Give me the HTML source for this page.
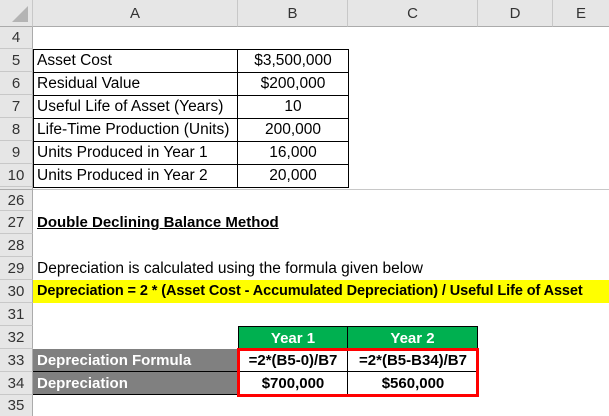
<!DOCTYPE html>
<html><head><style>
*{margin:0;padding:0;box-sizing:border-box}
body{width:609px;height:416px;overflow:hidden;background:#fff;font-family:"Liberation Sans",Arial,sans-serif;font-size:15.5px;color:#000;position:relative}
.a{position:absolute;white-space:nowrap}
.ch{top:0;height:27px;background:#e6e6e6;border-right:1px solid #c8c8c8;border-bottom:1px solid #ababab;text-align:center;line-height:27px;color:#333;font-size:15px}
.rh{left:0;width:33px;background:#e6e6e6;border-right:1px solid #ababab;border-bottom:1px solid #c8c8c8;text-align:center;color:#333;font-size:15px}
.c{line-height:23px;height:23px}
.b{font-weight:bold;font-size:15px}
</style></head><body>
<div class="a ch" style="left:0;width:33px"><div style="position:absolute;right:4px;bottom:4px;width:0;height:0;border-left:16px solid transparent;border-bottom:16px solid #b4b4b4"></div></div>
<div class="a ch" style="left:33px;width:205px">A</div>
<div class="a ch" style="left:238px;width:110px">B</div>
<div class="a ch" style="left:348px;width:130px">C</div>
<div class="a ch" style="left:478px;width:75px">D</div>
<div class="a ch" style="left:553px;width:56px;border-right:none">E</div>

<div class="a rh" style="top:27px;height:22px;line-height:22px">4</div>
<div class="a rh" style="top:49px;height:23px;line-height:23px">5</div>
<div class="a rh" style="top:72px;height:23px;line-height:23px">6</div>
<div class="a rh" style="top:95px;height:23px;line-height:23px">7</div>
<div class="a rh" style="top:118px;height:23px;line-height:23px">8</div>
<div class="a rh" style="top:141px;height:23px;line-height:23px">9</div>
<div class="a rh" style="top:164px;height:23px;line-height:23px">10</div>
<div class="a" style="left:0;top:187px;width:33px;height:3px;background:#e6e6e6;border-bottom:1px solid #ababab;border-right:1px solid #ababab"></div>
<div class="a" style="left:33px;top:187px;width:576px;height:3px;border-bottom:1px solid #c8c8c8"></div>
<div class="a rh" style="top:190px;height:21px;line-height:21px">26</div>
<div class="a rh" style="top:211px;height:23px;line-height:23px">27</div>
<div class="a rh" style="top:234px;height:23px;line-height:23px">28</div>
<div class="a rh" style="top:257px;height:23px;line-height:23px">29</div>
<div class="a rh" style="top:280px;height:23px;line-height:23px">30</div>
<div class="a rh" style="top:303px;height:23px;line-height:23px">31</div>
<div class="a rh" style="top:326px;height:23px;line-height:23px">32</div>
<div class="a rh" style="top:349px;height:23px;line-height:23px">33</div>
<div class="a rh" style="top:372px;height:23px;line-height:23px">34</div>
<div class="a rh" style="top:395px;height:21px;line-height:21px;border-bottom:none">35</div>

<div class="a" style="left:33px;top:49px;width:316px;height:139px;border:1px solid #000"></div>
<div class="a" style="left:237px;top:49px;width:1px;height:139px;background:#000"></div>
<div class="a" style="left:33px;top:72px;width:316px;height:1px;background:#000"></div>
<div class="a" style="left:33px;top:95px;width:316px;height:1px;background:#000"></div>
<div class="a" style="left:33px;top:118px;width:316px;height:1px;background:#000"></div>
<div class="a" style="left:33px;top:141px;width:316px;height:1px;background:#000"></div>
<div class="a" style="left:33px;top:164px;width:316px;height:1px;background:#000"></div>
<div class="a c" style="left:37px;top:49px">Asset Cost</div>
<div class="a c" style="left:37px;top:72px">Residual Value</div>
<div class="a c" style="left:37px;top:95px">Useful Life of Asset (Years)</div>
<div class="a c" style="left:37px;top:118px">Life-Time Production (Units)</div>
<div class="a c" style="left:37px;top:141px">Units Produced in Year 1</div>
<div class="a c" style="left:37px;top:164px">Units Produced in Year 2</div>
<div class="a c" style="left:238px;width:110px;text-align:center;top:49px">$3,500,000</div>
<div class="a c" style="left:238px;width:110px;text-align:center;top:72px">$200,000</div>
<div class="a c" style="left:238px;width:110px;text-align:center;top:95px">10</div>
<div class="a c" style="left:238px;width:110px;text-align:center;top:118px">200,000</div>
<div class="a c" style="left:238px;width:110px;text-align:center;top:141px">16,000</div>
<div class="a c" style="left:238px;width:110px;text-align:center;top:164px">20,000</div>

<div class="a c b" style="left:37px;top:211px;text-decoration:underline">Double Declining Balance Method</div>
<div class="a c" style="left:37px;top:257px">Depreciation is calculated using the formula given below</div>
<div class="a c b" style="left:33px;top:280px;width:576px;background:#ffff00;padding-left:4px;font-size:14.5px;letter-spacing:-0.1px">Depreciation = 2 * (Asset Cost - Accumulated Depreciation) / Useful Life of Asset</div>

<div class="a c b" style="left:238px;top:326px;width:110px;background:#00b050;color:#fff;text-align:center;border:1px solid #000">Year 1</div>
<div class="a c b" style="left:347px;top:326px;width:131px;background:#00b050;color:#fff;text-align:center;border:1px solid #000">Year 2</div>
<div class="a c b" style="left:33px;top:349px;width:205px;background:#808080;color:#fff;padding-left:4px;border-bottom:1px solid #000">Depreciation Formula</div>
<div class="a c b" style="left:33px;top:372px;width:205px;background:#808080;color:#fff;padding-left:4px;border-bottom:1px solid #000">Depreciation</div>
<div class="a c b" style="left:238px;top:349px;width:110px;text-align:center">=2*(B5-0)/B7</div>
<div class="a c b" style="left:348px;top:349px;width:130px;text-align:center">=2*(B5-B34)/B7</div>
<div class="a c b" style="left:238px;top:372px;width:110px;text-align:center">$700,000</div>
<div class="a c b" style="left:348px;top:372px;width:130px;text-align:center">$560,000</div>
<div class="a" style="left:347px;top:349px;width:1px;height:46px;background:#000"></div>
<div class="a" style="left:238px;top:371px;width:240px;height:1px;background:#000"></div>
<div class="a" style="left:237px;top:348px;width:242px;height:49px;border:3px solid #ff0000"></div>
</body></html>
